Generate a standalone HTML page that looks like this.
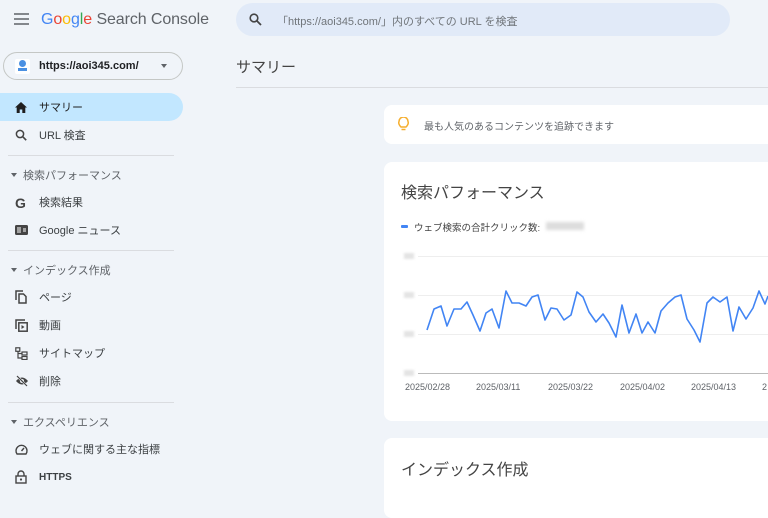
<!DOCTYPE html>
<html><head><meta charset="utf-8"><style>
*{margin:0;padding:0;box-sizing:border-box}
body{width:768px;height:494px;overflow:hidden;background:#f0f4f9;font-family:"Liberation Sans","Noto Sans CJK JP",sans-serif;color:#3c4043;position:relative}
.a{position:absolute}
.nav{position:absolute;left:0;width:183px;height:28px;display:flex;align-items:center;font-size:11px;color:#3c4043}
.nav svg{position:absolute;left:15px}
.nav span{position:absolute;left:39px}
.sec{position:absolute;left:11px;font-size:11px;color:#5f6368}
.sec:before{content:"";display:inline-block;border:3px solid transparent;border-top:4px solid #5f6368;margin-right:6px;vertical-align:-1px}
.hr{position:absolute;left:8px;width:166px;height:1px;background:#dadce0}
.card{position:absolute;left:384px;width:400px;background:#fff;border-radius:8px}
.yl{position:absolute;left:404px;width:10px;height:6px;background:#e4e4e4;filter:blur(1px)}
.xl{position:absolute;top:382px;font-size:9px;color:#5f6368}
</style></head><body>
<svg class="a" style="left:14px;top:13px" width="15" height="12"><path d="M0 1h15M0 6h15M0 11h15" stroke="#5f6368" stroke-width="1.6"/></svg>
<div class="a" style="left:41px;top:11px;font-size:16px;letter-spacing:-.1px;white-space:nowrap"><span style="color:#4285f4">G</span><span style="color:#ea4335">o</span><span style="color:#fbbc05">o</span><span style="color:#4285f4">g</span><span style="color:#34a853">l</span><span style="color:#ea4335">e</span> <span style="color:#5f6368">Search Console</span></div>
<div class="a" style="left:236px;top:3px;width:494px;height:33px;border-radius:17px;background:#e1eaf8"></div>
<svg class="a" style="left:249px;top:13px" width="13" height="13"><circle cx="5" cy="5" r="3.8" fill="none" stroke="#444" stroke-width="1.6"/><path d="M8 8l4 4" stroke="#444" stroke-width="1.8"/></svg>
<div class="a" style="left:277px;top:13px;font-size:11px;color:#70757a">「https://aoi345.com/」内のすべての URL を検査</div>

<div class="a" style="left:3px;top:52px;width:180px;height:28px;border:1px solid #c4c7c5;border-radius:14px"></div>
<div class="a" style="left:15px;top:59px;width:15px;height:15px;background:#fff;border-radius:2px"></div>
<div class="a" style="left:19px;top:60px;width:7px;height:7px;border-radius:50%;background:#4a90e2"></div>
<div class="a" style="left:18px;top:68px;width:9px;height:3px;background:#4a90e2"></div>
<div class="a" style="left:39px;top:60px;font-size:11px;font-weight:bold;color:#202124">https://aoi345.com/</div>
<div class="a" style="left:161px;top:64px;border:3px solid transparent;border-top:4px solid #5f6368"></div>

<div class="a" style="left:236px;top:56px;font-size:15px;color:#444">サマリー</div>
<div class="a" style="left:236px;top:87px;width:532px;height:1px;background:#dadce0"></div>

<div class="nav" style="top:93px;background:#c2e7ff;border-radius:0 14px 14px 0"><svg width="12" height="11"><path d="M6 0L0 5.5h1.7V11h3V7.5h2.6V11h3V5.5H12z" fill="#1f1f1f"/></svg><span style="color:#1f1f1f">サマリー</span></div>
<div class="nav" style="top:121px"><svg width="12" height="12"><circle cx="5" cy="5" r="3.6" fill="none" stroke="#444" stroke-width="1.5"/><path d="M7.6 7.6l3.6 3.6" stroke="#444" stroke-width="1.6"/></svg><span>URL 検査</span></div>
<div class="hr" style="top:155px"></div>
<div class="sec" style="top:167px">検索パフォーマンス</div>
<div class="nav" style="top:188px"><svg width="13" height="13" style="left:15px"><text x="0" y="12" font-size="14" font-weight="bold" fill="#444" font-family="Liberation Sans">G</text></svg><span>検索結果</span></div>
<div class="nav" style="top:216px"><svg width="13" height="10"><rect width="13" height="10" rx="1.5" fill="#444"/><path d="M2 3h4M2 5h4M2 7h4M8 4h3M8 6h3" stroke="#fff" stroke-width="1"/></svg><span>Google ニュース</span></div>
<div class="hr" style="top:250px"></div>
<div class="sec" style="top:262px">インデックス作成</div>
<div class="nav" style="top:283px"><svg width="12" height="14"><path d="M1 10V1h7" fill="none" stroke="#444" stroke-width="1.5"/><path d="M4 4h4.5l2.5 2.5V13H4z" fill="none" stroke="#444" stroke-width="1.5"/></svg><span>ページ</span></div>
<div class="nav" style="top:311px"><svg width="13" height="13"><path d="M1 10V1h9" fill="none" stroke="#444" stroke-width="1.5"/><rect x="3.8" y="3.8" width="8.4" height="8.4" fill="none" stroke="#444" stroke-width="1.5"/><path d="M6.5 6v4l3-2z" fill="#444"/></svg><span>動画</span></div>
<div class="nav" style="top:339px"><svg width="13" height="13"><rect x=".8" y=".8" width="4" height="3.5" fill="none" stroke="#444" stroke-width="1.2"/><rect x="7" y="5" width="5" height="3" fill="none" stroke="#444" stroke-width="1.2"/><rect x="7" y="9.5" width="5" height="3" fill="none" stroke="#444" stroke-width="1.2"/><path d="M3 4v7h4M3 6.5h4" fill="none" stroke="#444" stroke-width="1.2"/></svg><span>サイトマップ</span></div>
<div class="nav" style="top:367px"><svg width="14" height="12"><path d="M1 6Q7-1 13 6Q7 13 1 6z" fill="#444"/><circle cx="7" cy="6" r="2" fill="#f0f4f9"/><path d="M2 1l10 10" stroke="#f0f4f9" stroke-width="2.2"/><path d="M2 1l10 10" stroke="#444" stroke-width="1.2"/></svg><span>削除</span></div>
<div class="hr" style="top:402px"></div>
<div class="sec" style="top:414px">エクスペリエンス</div>
<div class="nav" style="top:435px"><svg width="13" height="11"><path d="M2 10A5.5 5.5 0 1 1 11 10z" fill="none" stroke="#444" stroke-width="1.4"/><path d="M6.5 7l2.5-3" stroke="#444" stroke-width="1.4"/></svg><span>ウェブに関する主な指標</span></div>
<div class="nav" style="top:463px"><svg width="12" height="14"><path d="M3 6V4a3 3 0 0 1 6 0v2" fill="none" stroke="#444" stroke-width="1.4"/><rect x="1" y="6" width="10" height="7" fill="none" stroke="#444" stroke-width="1.4"/><circle cx="6" cy="9.5" r="1.1" fill="#444"/></svg><span style="font-weight:bold;font-size:10px">HTTPS</span></div>

<div class="card" style="top:105px;height:39px"></div>
<svg class="a" style="left:398px;top:117px" width="11" height="15"><path d="M3 10Q0 7 1 4.5A4.5 4.5 0 0 1 10 4.5Q11 7 8 10z" fill="none" stroke="#f6ae2d" stroke-width="1.5"/><path d="M3.5 12.5h4" stroke="#f6ae2d" stroke-width="1.5"/></svg>
<div class="a" style="left:424px;top:118px;font-size:10px;color:#5f6368">最も人気のあるコンテンツを追跡できます</div>

<div class="card" style="top:162px;height:259px"></div>
<div class="a" style="left:401px;top:179px;font-size:16px;color:#444">検索パフォーマンス</div>
<div class="a" style="left:401px;top:225px;width:7px;height:3px;background:#4285f4;border-radius:1px"></div>
<div class="a" style="left:414px;top:220px;font-size:9.5px;color:#444">ウェブ検索の合計クリック数:</div>
<div class="a" style="left:546px;top:222px;width:38px;height:8px;background:#ddd;filter:blur(1.5px)"></div>
<div class="a" style="left:418px;top:256px;width:350px;height:1px;background:#eee"></div>
<div class="a" style="left:418px;top:295px;width:350px;height:1px;background:#eee"></div>
<div class="a" style="left:418px;top:334px;width:350px;height:1px;background:#eee"></div>
<div class="a" style="left:418px;top:373px;width:350px;height:1px;background:#bbb"></div>
<div class="yl" style="top:253px"></div><div class="yl" style="top:292px"></div><div class="yl" style="top:331px"></div><div class="yl" style="top:370px"></div>
<svg class="a" style="left:0;top:0" width="768" height="494"><polyline fill="none" stroke="#4285f4" stroke-width="1.6" stroke-linejoin="round" points="427,330 434,309 441,306 447,326 454,309 461,309 467,302 473,315 480,331 486,313 492,309 499,328 506,291 512,303 519,303 526,306 532,297 538,295 545,320 551,308 557,309 564,320 571,315 577,292 583,297 589,312 596,322 603,314 609,323 616,337 622,305 629,333 636,314 642,333 648,322 655,333 661,311 668,303 675,297 681,295 687,319 694,330 700,342 707,303 713,297 720,302 727,297 733,331 739,307 746,319 753,308 759,291 765,304 768,296"/></svg>
<div class="xl" style="left:405px">2025/02/28</div>
<div class="xl" style="left:476px">2025/03/11</div>
<div class="xl" style="left:548px">2025/03/22</div>
<div class="xl" style="left:620px">2025/04/02</div>
<div class="xl" style="left:691px">2025/04/13</div>
<div class="xl" style="left:762px">2</div>

<div class="card" style="top:438px;height:80px"></div>
<div class="a" style="left:401px;top:456px;font-size:16px;color:#444">インデックス作成</div>
</body></html>
